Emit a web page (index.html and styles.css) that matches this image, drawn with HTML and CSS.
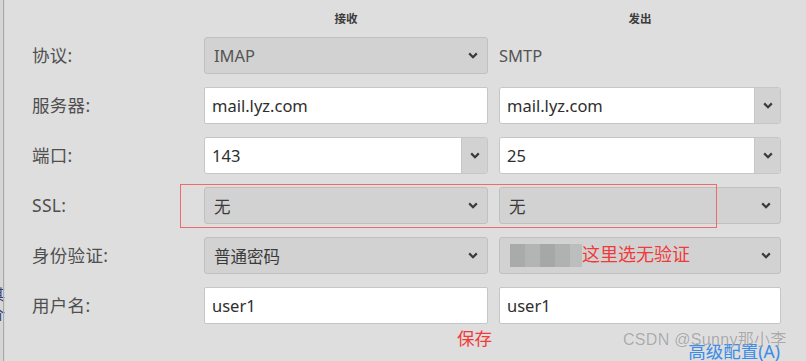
FILE: index.html
```html
<html>
    <head>
        <link rel="stylesheet" href="styles.css">
    </head>
    <body>
        <div class="edge">
            <span class="edgeText">其<br>介</span>
            <span class="edgeBar"></span>
        </div>
        <div class="dialog">
            <div class="grid head">
                <span></span>
                <span class="colTitle">接收</span>
                <span class="colTitle">发出</span>
            </div>
            <div class="grid rows">
                <label class="lbl">协议:</label>
                <div class="combo"><span class="val">IMAP</span><span class="arrow"><svg viewBox="0 0 10 7"><path d="M1.2 1.4 L5 5.2 L8.8 1.4"/></svg></span></div>
                <span class="plain">SMTP</span>

                <label class="lbl">服务器:</label>
                <div class="input">mail.lyz.com</div>
                <div class="edit"><span class="editVal">mail.lyz.com</span><span class="btn"><svg viewBox="0 0 10 7"><path d="M1.2 1.4 L5 5.2 L8.8 1.4"/></svg></span></div>

                <label class="lbl">端口:</label>
                <div class="edit"><span class="editVal">143</span><span class="btn"><svg viewBox="0 0 10 7"><path d="M1.2 1.4 L5 5.2 L8.8 1.4"/></svg></span></div>
                <div class="edit"><span class="editVal">25</span><span class="btn"><svg viewBox="0 0 10 7"><path d="M1.2 1.4 L5 5.2 L8.8 1.4"/></svg></span></div>

                <label class="lbl">SSL:</label>
                <div class="combo"><span class="val dark">无</span><span class="arrow"><svg viewBox="0 0 10 7"><path d="M1.2 1.4 L5 5.2 L8.8 1.4"/></svg></span></div>
                <div class="combo"><span class="val dark">无</span><span class="arrow"><svg viewBox="0 0 10 7"><path d="M1.2 1.4 L5 5.2 L8.8 1.4"/></svg></span></div>

                <label class="lbl">身份验证:</label>
                <div class="combo"><span class="val dark">普通密码</span><span class="arrow"><svg viewBox="0 0 10 7"><path d="M1.2 1.4 L5 5.2 L8.8 1.4"/></svg></span></div>
                <div class="combo"><span class="val"><span class="mosaic"><i class="m1"></i><i class="m2"></i><i class="m3"></i><i class="m4"></i><i class="m5"></i></span></span><span class="arrow"><svg viewBox="0 0 10 7"><path d="M1.2 1.4 L5 5.2 L8.8 1.4"/></svg></span></div>

                <label class="lbl">用户名:</label>
                <div class="input">user1</div>
                <div class="input">user1</div>
            </div>
            <div class="grid foot">
                <span></span>
                <span></span>
                <a class="advanced">高级配置(A)</a>
            </div>

            <!-- annotations drawn on the screenshot -->
            <div class="markBox"></div>
            <span class="note">这里选无验证</span>
            <span class="save">保存</span>
            <span class="watermark">CSDN @Sunny那小李</span>
        </div>
    </body>
</html>
```

FILE: styles.css
```css
/* dialog look, gtk-ish grey */
html, body {
    margin: 0;
    background-color: #dedede;
    overflow: hidden;
}
body {
    font-family: "Noto Sans", "Noto Sans CJK SC", sans-serif;
    color: #333333;
    width: 806px;
    height: 361px;
    position: relative;
}
.edge {
    position: absolute;
    left: 0;
    top: 0;
    width: 5px;
    height: 361px;
    overflow: hidden;
    background-color: #d6d6d6;
}
.edgeBar {
    position: absolute;
    left: 3px;
    top: 0;
    width: 1px;
    height: 361px;
    background-color: #a9a9a9;
}
.edgeText {
    position: absolute;
    left: -10px;
    top: 284px;
    font-size: 15px;
    line-height: 20px;
    color: #3d3f78;
}
.dialog {
    padding-left: 32px;
}
.grid {
    display: grid;
    grid-template-columns: 161px 284px 282px;
    column-gap: 11px;
}
.head {
    height: 37px;
}
.colTitle {
    text-align: center;
    font-size: 11.5px;
    font-weight: bold;
    line-height: 38px;
    color: #3c3c3c;
}
.rows {
    grid-auto-rows: 37px;
    row-gap: 13px;
}
.lbl {
    font-size: 17.5px;
    color: #4f4f4f;
    line-height: 37px;
    letter-spacing: 0.3px;
}
.plain {
    font-size: 16.5px;
    color: #555555;
    line-height: 37px;
}
.combo {
    box-sizing: border-box;
    display: flex;
    align-items: center;
    background-color: #d2d2d2;
    border: 1px solid #c0c0c0;
    border-radius: 3px;
    font-size: 16.5px;
}
.val {
    flex: 1;
    padding-left: 9px;
    color: #555555;
}
.val.dark {
    color: #3a3a3a;
}
.arrow {
    width: 28px;
    display: flex;
    justify-content: center;
}
svg {
    width: 10px;
    height: 7px;
    fill: none;
    stroke: #3a3a3a;
    stroke-width: 2.2;
}
.input {
    box-sizing: border-box;
    background-color: #ffffff;
    border: 1px solid #c6c6c6;
    border-radius: 2px;
    padding-left: 7px;
    font-size: 16.5px;
    line-height: 35px;
    color: #2e2e2e;
}
.edit {
    box-sizing: border-box;
    display: flex;
    border: 1px solid #c6c6c6;
    border-radius: 3px;
    overflow: hidden;
}
.editVal {
    flex: 1;
    background-color: #ffffff;
    padding-left: 7px;
    font-size: 16.5px;
    line-height: 35px;
    color: #2e2e2e;
}
.btn {
    width: 25px;
    background-color: #d2d2d2;
    border-left: 1px solid #c6c6c6;
    display: flex;
    align-items: center;
    justify-content: center;
}
.mosaic {
    display: flex;
    height: 23px;
    margin-left: 1px;
}
.mosaic i {
    display: block;
    width: 15px;
}
.m1 { background-color: #a9aaaa; }
.m2 { background-color: #b3b4b4; }
.m3 { background-color: #a6a7a7; }
.m4 { background-color: #b0b1b1; }
.m5 { background-color: #bcbdbd; width: 12px !important; }
.foot {
    margin-top: 17px;
}
.advanced {
    justify-self: end;
    font-size: 17.5px;
    color: #3b8be8;
    line-height: 20px;
    margin-right: 1px;
}
.markBox {
    position: absolute;
    left: 180px;
    top: 184px;
    width: 535px;
    height: 42px;
    border: 1.5px solid #ef6a6a;
}
.note {
    position: absolute;
    left: 582px;
    top: 242px;
    font-size: 18px;
    color: #f03a3a;
    line-height: 24px;
}
.save {
    position: absolute;
    left: 457px;
    top: 327px;
    font-size: 17.5px;
    color: #f23a3a;
    line-height: 22px;
}
.watermark {
    position: absolute;
    left: 623px;
    top: 330px;
    font-family: "Liberation Sans", "Noto Sans CJK SC", sans-serif;
    font-size: 16px;
    color: rgba(110, 110, 110, 0.55);
    text-shadow: 0 0 1px rgba(255, 255, 255, 0.6);
    line-height: 20px;
    letter-spacing: 0.3px;
}
```
